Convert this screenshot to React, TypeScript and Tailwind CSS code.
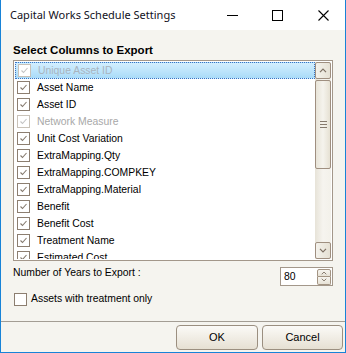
import React from "react";

const columns: { label: string; disabled?: boolean; selected?: boolean }[] = [
  { label: "Unique Asset ID", disabled: true, selected: true },
  { label: "Asset Name" },
  { label: "Asset ID" },
  { label: "Network Measure", disabled: true },
  { label: "Unit Cost Variation" },
  { label: "ExtraMapping.Qty" },
  { label: "ExtraMapping.COMPKEY" },
  { label: "ExtraMapping.Material" },
  { label: "Benefit" },
  { label: "Benefit Cost" },
  { label: "Treatment Name" },
  { label: "Estimated Cost" },
];

const ui = { fontFamily: '"Liberation Sans", Arial, sans-serif' };

function CheckBox({ checked, disabled }: { checked: boolean; disabled?: boolean }) {
  return (
    <span
      className={`flex h-[13px] w-[13px] shrink-0 items-center justify-center border bg-white ${
        disabled ? "border-[#c9c2b8]" : "border-[#8c7e70]"
      }`}
    >
      {checked && (
        <svg width="9" height="9" viewBox="0 0 9 9">
          <polyline
            points="1.5,4.5 3.5,6.5 7.5,2"
            fill="none"
            stroke={disabled ? "#c4c4c4" : "#857a6e"}
            strokeWidth="1.1"
          />
        </svg>
      )}
    </span>
  );
}

function Chevron({ up, size = 8 }: { up?: boolean; size?: number }) {
  return (
    <svg width={size} height={size / 2 + 1} viewBox="0 0 8 5">
      <polyline
        points={up ? "1,4.2 4,1.2 7,4.2" : "1,0.8 4,3.8 7,0.8"}
        fill="none"
        stroke="#7d7063"
        strokeWidth="1.2"
      />
    </svg>
  );
}

function ScrollBar() {
  return (
    <div className="flex w-[16px] flex-col bg-gradient-to-r from-[#e7e3d8] via-[#f6f4ef] to-[#f3f1ea]">
      <div className="flex h-[17px] items-center justify-center rounded-[2px] border border-[#9f8f80] bg-gradient-to-r from-[#f4f2ec] to-[#e6e1d4]">
        <Chevron up />
      </div>
      <div className="mt-px flex h-[89px] flex-col items-center justify-center gap-[2px] rounded-[2px] border border-[#9f8f80] bg-gradient-to-r from-[#e8e4d8] via-[#f5f3ed] to-[#e6e1d3]">
        <span className="h-px w-[7px] bg-[#867a6d]" />
        <span className="h-px w-[7px] bg-[#867a6d]" />
        <span className="h-px w-[7px] bg-[#867a6d]" />
      </div>
      <div className="flex-1" />
      <div className="flex h-[17px] items-center justify-center rounded-[2px] border border-[#9f8f80] bg-gradient-to-r from-[#f4f2ec] to-[#e6e1d4]">
        <Chevron />
      </div>
    </div>
  );
}

export default function App() {
  return (
    <div
      className="flex h-[353px] w-[346px] flex-col border-x border-b border-[#1883d7] bg-[#f5f4ef] text-black"
      style={ui}
    >
      <div className="flex h-[30px] shrink-0 items-center bg-white">
        <span
          className="ml-[9px] text-[11px] text-[#111122]"
          style={{ fontFamily: '"Noto Sans", "Open Sans", sans-serif' }}
        >
          Capital Works Schedule Settings
        </span>
        <svg className="ml-auto" width="130" height="30" viewBox="0 0 130 30">
          <line x1="12" y1="15.5" x2="23" y2="15.5" stroke="#000" strokeWidth="1" />
          <rect x="57.5" y="10.5" width="10" height="10" fill="none" stroke="#000" strokeWidth="1" />
          <path d="M103.5 10.5 L113.5 20.5 M113.5 10.5 L103.5 20.5" stroke="#000" strokeWidth="1.1" />
        </svg>
      </div>

      <div className="pl-[12px] pr-[11px]">
        <div className="mt-[13px] h-[14px] text-[11.5px] font-bold leading-[14px]">
          Select Columns to Export
        </div>

        <div className="mt-[3px] flex h-[201px] w-[320px] border border-[#a3978a] bg-white p-px">
          <div className="flex-1 overflow-hidden">
            {columns.map((c) => (
              <div
                key={c.label}
                className={`flex h-[17px] items-center gap-[7px] pl-[2px] ${
                  c.selected
                    ? "border border-dotted border-[#3b73c4] bg-gradient-to-b from-[#d3efff] to-[#a9dbf8] pl-[1px]"
                    : ""
                }`}
              >
                <CheckBox checked disabled={c.disabled} />
                <span
                  className={`text-[10.4px] leading-[13px] ${
                    c.disabled ? (c.selected ? "text-[#a9b4bf]" : "text-[#a8a8a8]") : "text-black"
                  }`}
                >
                  {c.label}
                </span>
              </div>
            ))}
          </div>
          <ScrollBar />
        </div>

        <div className="mt-[6px] flex items-start justify-between">
          <span className="text-[10.4px] leading-[12px]">Number of Years to Export :</span>
          <div className="mr-px flex h-[19px] w-[53px] items-center border border-[#a3978a] bg-white">
            <span className="ml-[3px] flex-1 text-[10.4px]">80</span>
            <div className="mr-px flex w-[14px] flex-col">
              <div className="flex h-[8px] items-center justify-center rounded-t-[2px] border border-[#a39483] bg-gradient-to-b from-[#f7f5f0] to-[#e7e2d6]">
                <Chevron up size={6} />
              </div>
              <div className="flex h-[8px] items-center justify-center rounded-b-[2px] border border-t-0 border-[#a39483] bg-gradient-to-b from-[#f7f5f0] to-[#e7e2d6]">
                <Chevron size={6} />
              </div>
            </div>
          </div>
        </div>

        <div className="ml-px mt-[6px] flex h-[14px] items-center gap-[4px]">
          <CheckBox checked={false} />
          <span className="text-[10.4px]">Assets with treatment only</span>
        </div>
      </div>

      <div className="mt-[15px] h-px bg-[#a39d94]" />

      <div className="mt-[3px] flex justify-end gap-[4px] pr-[2px]">
        <button className="flex h-[25px] w-[82px] items-center justify-center rounded-[4px] border border-[#9b8f80] bg-gradient-to-b from-[#fbfaf7] to-[#e6e0d3] text-[11px]">
          OK
        </button>
        <button className="flex h-[25px] w-[81px] items-center justify-center rounded-[4px] border border-[#9b8f80] bg-gradient-to-b from-[#fbfaf7] to-[#e6e0d3] text-[11px]">
          Cancel
        </button>
      </div>
    </div>
  );
}
